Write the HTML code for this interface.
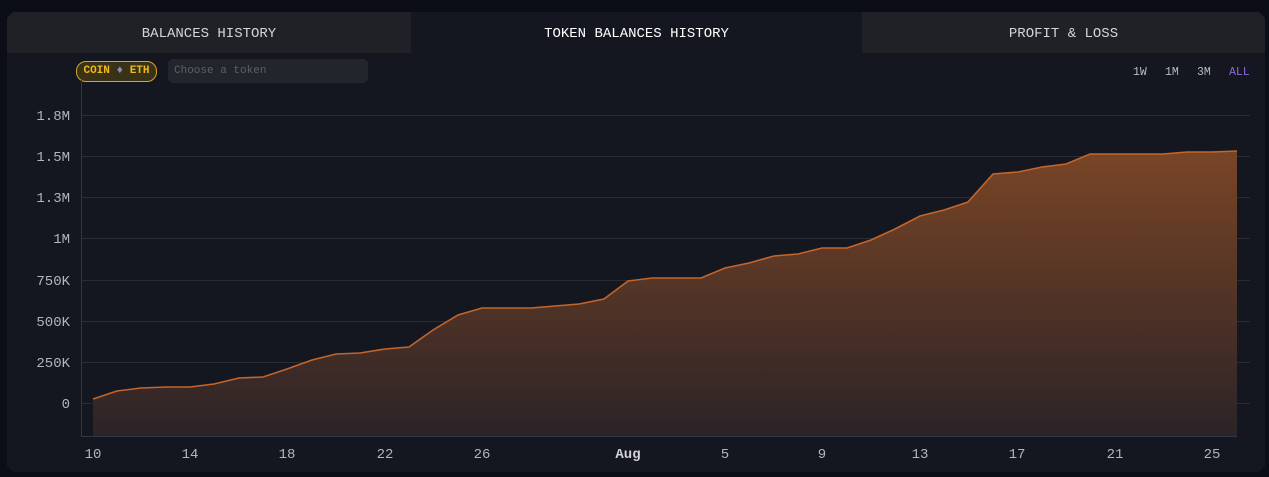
<!DOCTYPE html>
<html><head><meta charset="utf-8"><style>
body{margin:0;width:1269px;height:477px;background:#0b0e17;font-family:"Liberation Mono",monospace;overflow:hidden;position:relative}
.panel{position:absolute;left:7px;top:12px;width:1258px;height:460px;background:#141720;clip-path:polygon(6px 0,1252px 0,1258px 6px,1258px 454px,1252px 460px,6px 460px,0 454px,0 6px)}
.tab{position:absolute;top:0;height:41px;line-height:45px;text-align:center;font-size:14px;color:#d4d5d9;background:#1f2126}
.pill{position:absolute;left:76px;top:61px;border:1px solid #d9a520;border-radius:10px;background:#3a3217;color:#f0b81c;font-size:11px;font-weight:bold;line-height:19px;text-align:center;box-sizing:border-box;width:81px;height:21px}
.inp{position:absolute;left:168px;top:59px;width:200px;height:24px;background:#22252c;border-radius:5px;color:#5d606a;font-size:11px;line-height:25px;padding-left:6px;box-sizing:border-box}
.rng{position:absolute;top:66px;font-size:11.5px;color:#b8bac0}
</style></head><body>
<div class="panel">
<div class="tab" style="left:0;width:404px">BALANCES HISTORY</div>
<div class="tab" style="left:404px;width:451px;background:#141720;color:#fff">TOKEN BALANCES HISTORY</div>
<div class="tab" style="left:855px;width:403px">PROFIT &amp; LOSS</div>
</div>
<div class="pill">COIN <span style="color:#8a8db8">♦</span> ETH</div>
<div class="inp">Choose a token</div>
<div class="rng" style="left:1133px">1W</div>
<div class="rng" style="left:1165px">1M</div>
<div class="rng" style="left:1197px">3M</div>
<div class="rng" style="left:1229px;color:#8c6ae0">ALL</div>
<svg width="1269" height="477" style="position:absolute;left:0;top:0" font-family="Liberation Mono, monospace">
<defs><linearGradient id="g" x1="0" y1="150" x2="0" y2="436" gradientUnits="userSpaceOnUse"><stop offset="0" stop-color="#7a4526"/><stop offset="1" stop-color="#2b2327"/></linearGradient></defs>
<g stroke="#2a2c34" stroke-width="1">
<line x1="81" y1="115.5" x2="1250" y2="115.5"/><line x1="81" y1="156.5" x2="1250" y2="156.5"/><line x1="81" y1="197.5" x2="1250" y2="197.5"/><line x1="81" y1="238.5" x2="1250" y2="238.5"/><line x1="81" y1="280.5" x2="1250" y2="280.5"/><line x1="81" y1="321.5" x2="1250" y2="321.5"/><line x1="81" y1="362.5" x2="1250" y2="362.5"/><line x1="81" y1="403.5" x2="1250" y2="403.5"/>
</g>
<path fill="url(#g)" stroke="none" d="M93,399 L117,391 141,388 166,387 190,387 214,384 239,378 263,377 287,369 312,360 336,354 360,353 385,349 409,347 433,330 458,315 482,308 506,308 531,308 555,306 579,304 604,299 628,281 652,278 677,278 701,278 725,268 749,263 774,256 798,254 822,248 847,248 871,240 895,229 920,216 944,210 968,202 993,174 1018,172 1042,167 1066,164 1090,154 1115,154 1139,154 1163,154 1187,152 1212,152 1237,151 L1237,436 L93,436 Z"/>
<polyline fill="none" stroke="#c4652a" stroke-width="1.6" points="93,399 117,391 141,388 166,387 190,387 214,384 239,378 263,377 287,369 312,360 336,354 360,353 385,349 409,347 433,330 458,315 482,308 506,308 531,308 555,306 579,304 604,299 628,281 652,278 677,278 701,278 725,268 749,263 774,256 798,254 822,248 847,248 871,240 895,229 920,216 944,210 968,202 993,174 1018,172 1042,167 1066,164 1090,154 1115,154 1139,154 1163,154 1187,152 1212,152 1237,151"/>
<line x1="81.5" y1="80" x2="81.5" y2="436" stroke="#33354a"/>
<line x1="81" y1="436.5" x2="1237" y2="436.5" stroke="#33354a"/>
<g fill="#b3b5bc" font-size="14" text-anchor="end">
<text x="70" y="120">1.8M</text><text x="70" y="161">1.5M</text><text x="70" y="202">1.3M</text><text x="70" y="243">1M</text><text x="70" y="285">750K</text><text x="70" y="326">500K</text><text x="70" y="367">250K</text><text x="70" y="408">0</text>
</g>
<g fill="#b3b5bc" font-size="14" text-anchor="middle">
<text x="93" y="458">10</text><text x="190" y="458">14</text><text x="287" y="458">18</text><text x="385" y="458">22</text><text x="482" y="458">26</text><text x="628" y="458" font-weight="bold" fill="#d0d2d8">Aug</text><text x="725" y="458">5</text><text x="822" y="458">9</text><text x="920" y="458">13</text><text x="1017" y="458">17</text><text x="1115" y="458">21</text><text x="1212" y="458">25</text>
</g>
</svg>
</body></html>
